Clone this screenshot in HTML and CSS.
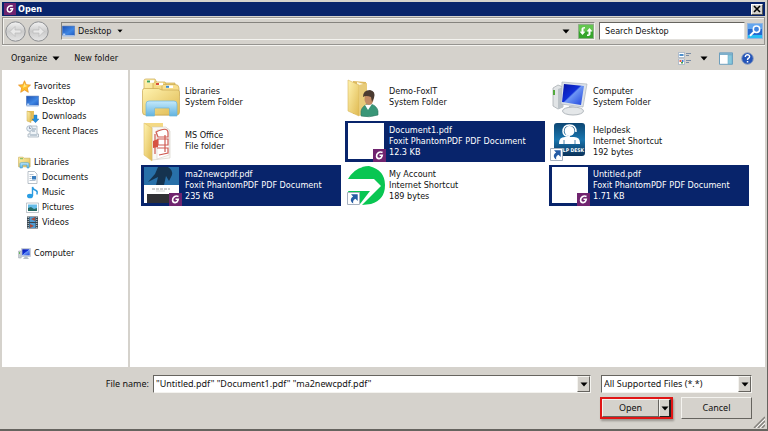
FILE: index.html
```html
<!DOCTYPE html>
<html lang="en">
<head>
<meta charset="utf-8">
<title>Open</title>
<link rel="stylesheet" href="styles.css">
</head>
<body>
<svg class="defs" aria-hidden="true">
  <defs>
    <linearGradient id="gold" x1="0" y1="0" x2="1" y2="1"><stop offset="0" stop-color="#fff3b0"/><stop offset="1" stop-color="#dfb950"/></linearGradient>
    <linearGradient id="aqua" x1="0" y1="0" x2="0" y2="1"><stop offset="0" stop-color="#c4e9fb"/><stop offset="1" stop-color="#62b3e0"/></linearGradient>
    <linearGradient id="screen" x1="0" y1="0" x2="1" y2="1"><stop offset="0" stop-color="#0713a4"/><stop offset=".45" stop-color="#1030d8"/><stop offset=".5" stop-color="#6d96f4"/><stop offset="1" stop-color="#1c42dd"/></linearGradient>
    <linearGradient id="desk" x1="0" y1="0" x2="1" y2="1"><stop offset="0" stop-color="#1b50b4"/><stop offset=".6" stop-color="#3f87e4"/><stop offset="1" stop-color="#1e5ac2"/></linearGradient>
    <linearGradient id="help" x1="0" y1="0" x2="0" y2="1"><stop offset="0" stop-color="#0d4673"/><stop offset=".5" stop-color="#1a76ae"/><stop offset="1" stop-color="#0a3159"/></linearGradient>
    <linearGradient id="orb" x1="0" y1="0" x2="0" y2="1"><stop offset="0" stop-color="#f3f3f3"/><stop offset=".5" stop-color="#cbcbcb"/><stop offset="1" stop-color="#e6e6e6"/></linearGradient>
    <symbol id="fox" viewBox="0 0 12 12"><path fill="#70246f" d="M0 0h12v12H0z"/><path d="M8.800 3.200C6 1.800 3 4 3.300 6.800c.3 2.600 4 2.900 4.900.2l.3-1.200H6" fill="none" stroke="#fff" stroke-width="1.500"/></symbol>
    <symbol id="desktop" viewBox="0 0 12 12"><path fill="url(#desk)" stroke="#5275b2" stroke-width=".5" d="M.3 1h11.400v8.500H.3z"/><path fill="#abc5eb" d="M.5 9.400h11v1.300H.5z"/><path fill="#dfedff" d="M1 8h2v1H1z"/></symbol>
    <symbol id="library" viewBox="0 0 13 13"><path fill="url(#gold)" stroke="#c6a74a" stroke-width=".6" d="M.6 1.200h4.500l1 1h6v8.600H.6z"/><path stroke="#72b865" d="M2 2.700h3"/><path fill="url(#aqua)" stroke="#3c9ed2" stroke-width=".6" d="M2 12V7.800Q2 6.700 3.200 6.700h6.500q1.300 0 1.300 1.100V12H9V9H4.400v3z"/></symbol>
    <symbol id="shortcut" viewBox="0 0 13 13"><path fill="#fff" stroke="#a6b1bf" d="M.5.500h12v12H.5z"/><path fill="#245ba4" d="M4 2.300h6.700V9L8.400 6.700C6 8 5.800 9.500 6.300 11.500 2.800 9.200 3.200 6.300 6.100 4.400z"/></symbol>
    <symbol id="down" viewBox="0 0 8 5"><path d="M.5.500h7L4 4.500z"/></symbol>
  </defs>
</svg>

<div class="window">
  <header class="title">
    <svg class="app" viewBox="0 0 12 12"><use href="#fox"/></svg>
    <h1>Open</h1>
    <button class="close" aria-label="Close"><svg viewBox="0 0 8 8"><path d="M1 1l6 6M7 1L1 7" stroke="#000" stroke-width="1.600"/></svg></button>
  </header>

  <nav class="address">
    <div class="travel">
      <button aria-label="Back"><svg viewBox="0 0 21 21"><circle cx="10.500" cy="10.500" r="9.700" fill="url(#orb)" stroke="#8d8f92"/><path d="M10 5.500l-5 5 5 5v-3.500h6v-3h-6z" fill="#e8e8e8" stroke="#bababa" stroke-width=".7"/></svg></button>
      <button aria-label="Forward"><svg viewBox="0 0 21 21"><circle cx="10.500" cy="10.500" r="9.700" fill="url(#orb)" stroke="#8d8f92"/><path d="M11 5.500l5 5-5 5v-3.500H5v-3h6z" fill="#e8e8e8" stroke="#bababa" stroke-width=".7"/></svg></button>
    </div>
    <div class="path">
      <svg class="icon" viewBox="0 0 12 12"><use href="#desktop"/></svg>
      <button class="crumb">Desktop <svg class="tiny" viewBox="0 0 8 5"><use href="#down"/></svg></button>
      <button class="recent" aria-label="Previous locations"><svg class="arrow" viewBox="0 0 8 5"><use href="#down"/></svg></button>
      <button class="refresh" aria-label="Refresh"><svg viewBox="0 0 16 15"><path fill="#36a52c" stroke="#8dad87" d="M.5.500h15v14H.5z"/><path fill="#64c64f" d="M1 1h14v6H1z"/><path fill="#fff" d="M7 3v1.500H5.500v3h2L4.500 11 1.500 7.500h2V5q0-2 3.500-2zM9 12v-1.500h1.500v-3h-2L11.500 4l3 3.500h-2V10q0 2-3.500 2z"/></svg></button>
    </div>
    <input class="search" type="text" value="Search Desktop" aria-label="Search Desktop">
    <button class="find" aria-label="Search"><svg viewBox="0 0 16 16"><path fill="#2468cf" stroke="#92b5df" d="M.5.500h15v15H.5z"/><path fill="#62a5ee" d="M1 1h14v5H1z"/><path fill="#28bdf3" d="M1 12h14v3H1z"/><circle cx="9.500" cy="6.200" r="3.200" fill="#4285de" stroke="#fff" stroke-width="1.500"/><path stroke="#fff" stroke-width="2" d="M7 8.700l-4 4"/></svg></button>
  </nav>

  <div class="tools">
    <button>Organize <svg class="arrow" viewBox="0 0 8 5"><use href="#down"/></svg></button>
    <button>New folder</button>
    <span class="views">
      <button aria-label="Change view"><svg class="view" viewBox="0 0 14 13"><path fill="#fff" stroke="#9aaabd" stroke-width=".7" d="M.5.500h6v5h-6zM.5 7h6v5.500h-6z"/><path fill="#4d8fca" d="M1.500 2h4v2h-4z"/><path fill="#e05b41" d="M1.500 8h2v2h-2z"/><path fill="#45a04d" d="M3 10h2v1.500H3z"/><path fill="#3578dc" d="M4 8h1.500v2H4z"/><path stroke="#7b8da5" d="M8 1.500h5M8 3.500h3M8 8.500h5M8 10.500h3"/></svg></button>
      <button aria-label="More views"><svg class="arrow" viewBox="0 0 8 5"><use href="#down"/></svg></button>
      <button class="pane" aria-label="Preview pane"><svg class="view" viewBox="0 0 14 13"><path fill="#fff" stroke="#6e9fbd" d="M.5.800h13v11.500H.5z"/><path stroke="#7eafcb" stroke-width="2" d="M1 2h12"/><path fill="#86c8dd" stroke="#6badc8" stroke-width=".6" d="M9 3h4v9H9z"/></svg></button>
      <button aria-label="Help"><svg class="icon" viewBox="0 0 13 13"><circle cx="6.500" cy="6.500" r="5.800" fill="#2454b8" stroke="#8d9fbf"/><path d="M4.300 5c0-3.200 4.500-2.700 4.300-.2C8.500 6.300 6.500 6 6.500 8" fill="none" stroke="#fff" stroke-width="1.400"/><path fill="#fff" d="M5.800 9h1.500v1.500H5.800z"/></svg></button>
    </span>
  </div>

  <main>
    <aside>
      <ul>
        <li><svg class="icon" viewBox="0 0 13 13"><path fill="#ffbd27" stroke="#e58b1d" stroke-width=".7" d="M6.500.700l1.700 4 4.300.4-3.200 2.900 1 4.300-3.800-2.300-3.800 2.300 1-4.300L.5 5.100l4.300-.4z"/><path fill="#ffe889" d="M6.500 3l1 2.500 2.500.3-5 2z"/></svg><a href="#f">Favorites</a></li>
        <li class="sub"><svg class="icon" viewBox="0 0 12 12"><use href="#desktop"/></svg><a href="#f">Desktop</a></li>
        <li class="sub"><svg class="icon" viewBox="0 0 13 13"><path fill="#e5bd58" d="M1 1h7v10H1z"/><path fill="url(#gold)" stroke="#cba94e" stroke-width=".5" d="M1 1l4 1.500v10L1 11z"/><path fill="#268edb" stroke="#1c70b6" stroke-width=".4" d="M8 5h3v4h2l-3.500 3.700L6 9h2z"/></svg><a href="#f">Downloads</a></li>
        <li class="sub"><svg class="icon" viewBox="0 0 13 13"><path fill="#eef3f7" stroke="#9ba9b5" stroke-width=".7" d="M4 1h7v8h1.500v3H2V9h2z"/><path stroke="#8da1b2" d="M6 4h4M6 6h3M4 10h7"/><circle cx="3.500" cy="3.500" r="2.800" fill="#e6f0f7" stroke="#97a8b7" stroke-width=".7"/><path d="M3.500 1.500v2h1.500" fill="none" stroke="#668" stroke-width=".6"/></svg><a href="#f">Recent Places</a></li>
      </ul>
      <ul>
        <li><svg class="icon" viewBox="0 0 13 13"><use href="#library"/></svg><a href="#f">Libraries</a></li>
        <li class="sub"><svg class="icon" viewBox="0 0 13 13"><path fill="#fff" stroke="#9ba7b3" stroke-width=".7" d="M2 .5h6.500L11 3v9.500H2z"/><path d="M3.500 3.500h4M3.500 5.500h2M3.500 7.500h2M3.500 9.500h6" stroke="#9fb2c5" stroke-width=".8"/><path fill="#397dbd" d="M6 5h4v3.500H6z"/></svg><a href="#f">Documents</a></li>
        <li class="sub"><svg class="icon" viewBox="0 0 13 13"><path d="M6.500 10V1q.5 2.500 3.500 3.500 2 1 .8 4" fill="none" stroke="#2d9be0" stroke-width="1.400"/><ellipse cx="4" cy="10" rx="3" ry="2.300" fill="#299de3"/></svg><a href="#f">Music</a></li>
        <li class="sub"><svg class="icon" viewBox="0 0 13 13"><path fill="#fff" stroke="#a4acb4" stroke-width=".7" d="M.4 2h12.200v9.500H.4z"/><path fill="#66bce9" d="M2 3.500h9v6.500H2z"/><path fill="#266d67" d="M2 7l3-1 3 2 3-1v3H2z"/></svg><a href="#f">Pictures</a></li>
        <li class="sub"><svg class="icon" viewBox="0 0 13 13"><path fill="#38444e" d="M1 .5h11v12H1z"/><path fill="#4f9bd2" d="M3.500 1h6v5h-6zM3.500 7h6v5h-6z"/><path stroke="#dce4e8" stroke-dasharray="1 1" d="M2.200 1v11M10.800 1v11"/><path fill="#aa4b38" d="M5 3l4-2v4zM4 8l4 2-4 2z"/></svg><a href="#f">Videos</a></li>
      </ul>
      <ul>
        <li><svg class="icon" viewBox="0 0 13 13"><path fill="#ccd1d5" stroke="#939fa8" stroke-width=".5" d="M.6 4h2.600v7H.6z"/><path fill="#67b65d" d="M1 5h1v2H1z"/><path fill="#cfd8e5" stroke="#a4afbd" stroke-width=".5" d="M3.500 1.500h9v8h-9z"/><path fill="url(#screen)" d="M4.300 2.300h7.400v6H4.300z"/><path fill="#b5bdc5" d="M7 9.500h2l2 2.500H5z"/></svg><a href="#f">Computer</a></li>
      </ul>
    </aside>

    <ul class="files">
      <li class="brief"><svg class="thumb" viewBox="0 0 40 40"><g stroke="#c9a852" stroke-width=".7"><path fill="url(#gold)" d="M3 5V2.500Q3 1 5 1h9l2 4h18v29H3z"/><path fill="#f5da82" d="M12 8V5.500Q12 4 14 4h10l2 4h10v29H12z"/><path fill="#f8df8e" d="M21 10V8q0-1.500 2-1.500h11q4 0 4 3.500v8H21z"/><path fill="url(#gold)" d="M1.500 12.500q0-2 2-2h14L21 12h15.500q2 0 2 2v20q0 3-3 3h-31q-3 0-3-3z"/></g><path stroke="#fff" stroke-width="2.500" d="M6 3.500h7M15 6h7M25 8.800h7"/><path stroke="#42a358" stroke-width="2" d="M6 3.500h3"/><path stroke="#d94d3b" stroke-width="2" d="M15 6h3"/><path stroke="#3a8bcb" stroke-width="2" d="M25 8.800h3"/><path fill="url(#aqua)" stroke="#6fb4d8" stroke-width=".7" d="M5 38V26q0-3 3-3h25q3 0 3 3v12h-7.500v-7q0-1-1-1h-13q-1 0-1 1v7z"/></svg>
        <p>Libraries<br>System Folder</p></li>
      <li class="brief"><svg class="thumb" viewBox="0 0 40 40"><path fill="#ddb95f" d="M8 3l13 1v29L8 36z"/><path fill="#fff8df" d="M12 4l7 2v26l-7 2z"/><path fill="url(#gold)" stroke="#d8b75d" stroke-width=".6" d="M3 2l11 5v31L3 33z"/><path fill="#e8cc7a" d="M14 7l8-2v29l-8 4z"/><path fill="#399677" stroke="#2e765f" stroke-width=".6" d="M16 38v-5q1-5 7-7h3q6 2 7 7v4q-9 3-17 1z"/><path fill="#fff" d="M20 27l3 5 4-6z"/><ellipse cx="24" cy="21" rx="4.500" ry="6" fill="#c28b64"/><path fill="#4a3a30" d="M18 19q0-7 7-7 6 1 4 8l-2 4-1-5q-5-2-8 0z"/></svg>
        <p>Demo-FoxIT<br>System Folder</p></li>
      <li class="brief"><svg class="thumb" viewBox="0 0 40 40"><path fill="#e1e4e6" stroke="#a0a6aa" stroke-width=".7" d="M4 10l5-3 5 2v20l-5 2-5-3z"/><path fill="#bcc3c8" d="M9 11l5-2v20l-5 2z"/><path stroke="#54aa3d" stroke-width="2" d="M5 12v5"/><path fill="#dce2e9" stroke="#aeb5bd" stroke-width=".7" d="M13 4l25 2-4 23-22-3z"/><path fill="url(#screen)" d="M15 6l20 2-3 19-19-3z"/><path fill="#b7bec5" d="M20 28l7 1v4h-7z"/><ellipse cx="24" cy="33" rx="10.500" ry="4" fill="#e4e7e9" stroke="#b2b8bd"/></svg>
        <p>Computer<br>System Folder</p></li>
      <li class="brief"><svg class="thumb" viewBox="0 0 40 40"><path fill="#f4d984" d="M4 1h18v31L4 34z"/><path fill="#faf9f5" stroke="#d1cdc4" stroke-width=".6" d="M11 5h14l4 4v27l-18 2z"/><path fill="#fff" stroke="#d0c5bd" stroke-width=".5" d="M16 8l12-1v26l-12 4z"/><path fill="none" stroke="#cf5b52" stroke-width="1.200" d="M15 10q12-6 12 1v4H17zM17 17h10v6H17zM16 26h11v5l-9 2M14 12v20M24 13v17"/><path fill="#d65341" d="M12 19l5-2v8l-5 1z"/><path fill="url(#gold)" stroke="#dfc16b" stroke-width=".6" d="M3 1l8 5v33l-8-6z"/></svg>
        <p>MS Office<br>File folder</p></li>
      <li class="selected"><svg class="thumb" viewBox="0 0 40 40"><path fill="#fff" d="M3 1h36v36H3z"/><use href="#fox" x="28" y="27" width="13" height="13"/></svg>
        <p>Document1.pdf<br>Foxit PhantomPDF PDF Document<br>12.3 KB</p></li>
      <li><svg class="thumb" viewBox="0 0 40 40"><rect x="5" y="1" width="31" height="33" rx="3" fill="url(#help)"/><circle cx="20.500" cy="9" r="5" fill="#fff"/><path fill="#fff" d="M10 21q0-6 6-6h9q6 0 6 6v1H10z"/><path fill="none" stroke="#fff" stroke-width="1.500" d="M14 10q0-7 6.500-7T27 10M14 10q1 5 7 4"/><path stroke="#236b9c" stroke-width=".8" d="M15 18v4M26 18v4"/><text x="7" y="30" class="badge">HELP DESK</text><use href="#shortcut" x="1" y="26" width="13" height="13"/></svg>
        <p>Helpdesk<br>Internet Shortcut<br>192 bytes</p></li>
      <li class="selected"><svg class="thumb" viewBox="0 0 40 40"><path fill="#fff" d="M3 1h35v36H3z"/><path fill="#2870a9" d="M3 1h35v18H3z"/><path fill="#15334f" d="M17 1h10q5 3 4 8l-3 6-3-5-2 9h-8l2-8-10 5 7-8z"/><path stroke="#888" stroke-width=".8" stroke-dasharray="3 1" d="M11 23h18"/><path stroke="#bbb" stroke-width=".6" d="M15 25h9"/><path fill="#303034" d="M6 28h29v9H6z"/><use href="#fox" x="28" y="27" width="13" height="13"/></svg>
        <p>ma2newcpdf.pdf<br>Foxit PhantomPDF PDF Document<br>235 KB</p></li>
      <li><svg class="thumb" viewBox="0 0 40 40"><g fill="#09c652"><path d="M3 13Q9 3 18 1l14 12z"/><path d="M24 0q16 4 16 19T26 38l-9 1 19-19L17 1q4-1 7-1z"/><path d="M3 25h22L15 38Q7 35 3 25z"/></g><use href="#shortcut" x="2" y="26" width="13" height="13"/></svg>
        <p>My Account<br>Internet Shortcut<br>189 bytes</p></li>
      <li class="selected"><svg class="thumb" viewBox="0 0 40 40"><path fill="#fff" d="M3 1h36v36H3z"/><use href="#fox" x="28" y="27" width="13" height="13"/></svg>
        <p>Untitled.pdf<br>Foxit PhantomPDF PDF Document<br>1.71 KB</p></li>
    </ul>
  </main>

  <footer>
    <label for="name">File name:</label>
    <div class="combo"><input id="name" type="text" value="&quot;Untitled.pdf&quot; &quot;Document1.pdf&quot; &quot;ma2newcpdf.pdf&quot;"><button class="drop" aria-label="Show recent names"><svg class="arrow" viewBox="0 0 8 5"><use href="#down"/></svg></button></div>
    <div class="combo"><select aria-label="File type"><option>All Supported Files (*.*)</option></select><span class="drop"><svg class="arrow" viewBox="0 0 8 5"><use href="#down"/></svg></span></div>
    <div class="actions">
      <div class="open"><button class="main">Open</button><button class="more" aria-label="Open options"><svg class="arrow" viewBox="0 0 8 5"><use href="#down"/></svg></button></div>
      <button class="cancel">Cancel</button>
    </div>
    <svg class="grip" viewBox="0 0 12 12"><path d="M1 12L12 1M5 12l7-7M9 12l3-3" stroke="#85837e" stroke-width="1.500"/><path d="M3 12l9-9M7 12l5-5" stroke="#fff" stroke-width=".8"/></svg>
  </footer>
</div>
</body>
</html>
```
FILE: styles.css
```css
* { box-sizing: border-box; }

body {
  margin: 0;
  color: #111;
  font: 9px/11px "DejaVu Sans Condensed", "DejaVu Sans", sans-serif;
}

button, input, select { font: inherit; color: inherit; }
button { display: flex; align-items: center; padding: 0; border: 0; background: none; }
ul, p, h1 { margin: 0; padding: 0; list-style: none; }
a { color: inherit; text-decoration: none; }
svg { display: block; flex: none; }

.defs { position: absolute; width: 0; height: 0; }
.icon { width: 13px; height: 13px; }
.view { width: 14px; height: 13px; }
.arrow { width: 8px; height: 5px; }
.tiny { width: 6px; height: 4px; }

.window {
  display: flex;
  flex-direction: column;
  min-height: 100vh;
  padding: 2px 2px 0;
  background: #d5d2cc;
  border-right: 1px solid #66645f;
  border-bottom: 2px solid #66645f;
}

.title {
  display: flex;
  align-items: center;
  gap: 2px;
  height: 14px;
  padding: 0 2px 0 2px;
  color: #fff;
  background: #08246b;
}
.app { width: 12px; height: 12px; }
h1 { flex: 1; font-size: 9px; font-weight: bold; }
.close {
  justify-content: center;
  width: 12px;
  height: 11px;
  background: #d5d2cc;
  border: 1px solid;
  border-color: #fff #555 #555 #fff;
}
.close svg { width: 8px; height: 8px; }

.address {
  display: flex;
  align-items: center;
  gap: 2px;
  height: 28px;
  margin-top: 1px;
  padding: 0 1px 0 2px;
  border: 1px solid #969490;
  box-shadow: inset 1px 1px #f4f3ef, 0 1px #f4f3ef;
}
.travel { display: flex; gap: 2px; margin-right: 10px; }
.travel svg { width: 21px; height: 21px; }
.path {
  display: flex;
  flex: 1;
  align-items: center;
  height: 18px;
  border: 1px solid;
  border-color: #85837e #f4f3ef #f4f3ef #85837e;
}
.crumb { gap: 6px; margin-left: 3px; }
.recent { margin: 0 8px 0 auto; }
.refresh svg { width: 16px; height: 15px; }
.search {
  width: 146px;
  height: 18px;
  margin-left: 2px;
  padding: 0 5px;
  background: #fff;
  border: 1px solid;
  border-color: #66645f #e2e0dc #e2e0dc #66645f;
}
.find svg { width: 16px; height: 16px; }

.tools {
  display: flex;
  align-items: center;
  gap: 14px;
  height: 25px;
  padding: 1px 11px 0 9px;
}
.tools button { gap: 5px; }
.views { display: flex; align-items: center; gap: 8px; margin-left: auto; }
.pane { margin-left: 3px; }

main {
  display: grid;
  flex: 1;
  grid-template-columns: 126px 1fr;
  gap: 2px;
}
aside {
  display: flex;
  flex-direction: column;
  gap: 16px;
  padding: 9px 0 0 16px;
  background: #fff;
}
aside li { display: flex; align-items: center; gap: 3px; height: 15px; }
.sub { padding-left: 8px; }

.files {
  display: grid;
  grid-template-columns: repeat(auto-fill, 200px);
  align-content: start;
  gap: 3px 4px;
  padding: 7px 0 0 11px;
  background: #fff;
}
.files li { display: flex; align-items: center; gap: 4px; height: 41px; }
.files .selected { color: #fff; background: #08246b; }
.brief p { padding-bottom: 2px; }
.thumb { width: 40px; height: 40px; overflow: visible; }
.badge { fill: #fff; font-size: 5px; font-weight: bold; }

footer {
  position: relative;
  display: grid;
  grid-template-columns: 147px 1fr 151px;
  gap: 4px 0;
  padding: 8px 13px 10px 0;
  font: 9px/12px "Noto Sans", "Open Sans", sans-serif;
}
footer label { line-height: 18px; text-align: right; }
.combo {
  position: relative;
  display: flex;
  height: 18px;
  margin-left: 4px;
  background: #fff;
  border: 1px solid;
  border-color: #66645f #f4f3ef #f4f3ef #66645f;
}
.combo + .combo { margin-left: 0; }
label + .combo { margin-right: 10px; }
.combo input, .combo select {
  flex: 1;
  min-width: 0;
  padding: 0 2px;
  background: none;
  border: 0;
  appearance: none;
}
.drop {
  display: flex;
  align-items: center;
  justify-content: center;
  width: 13px;
  background: #d5d2cc;
  border: 1px solid;
  border-color: #f4f3ef #66645f #66645f #f4f3ef;
}
select + .drop { position: absolute; top: 0; right: 0; bottom: 0; pointer-events: none; }
.actions { display: flex; grid-column: 3; gap: 8px; height: 22px; }
.actions button {
  justify-content: center;
  background: #d5d2cc;
  border: 1px solid;
  border-color: #f4f3ef #66645f #66645f #f4f3ef;
}
.open {
  display: flex;
  width: 73px;
  margin-left: -1px;
  border: 2px solid #e01515;
  box-shadow: 1px 2px 2px #99958f;
}
.open .main { flex: 1; }
.open .more { width: 12px; border-right: 2px solid #222; border-bottom-color: #222; }
.cancel { flex: 1; }
.grip { position: absolute; right: 0; bottom: 1px; width: 12px; height: 12px; }
```
